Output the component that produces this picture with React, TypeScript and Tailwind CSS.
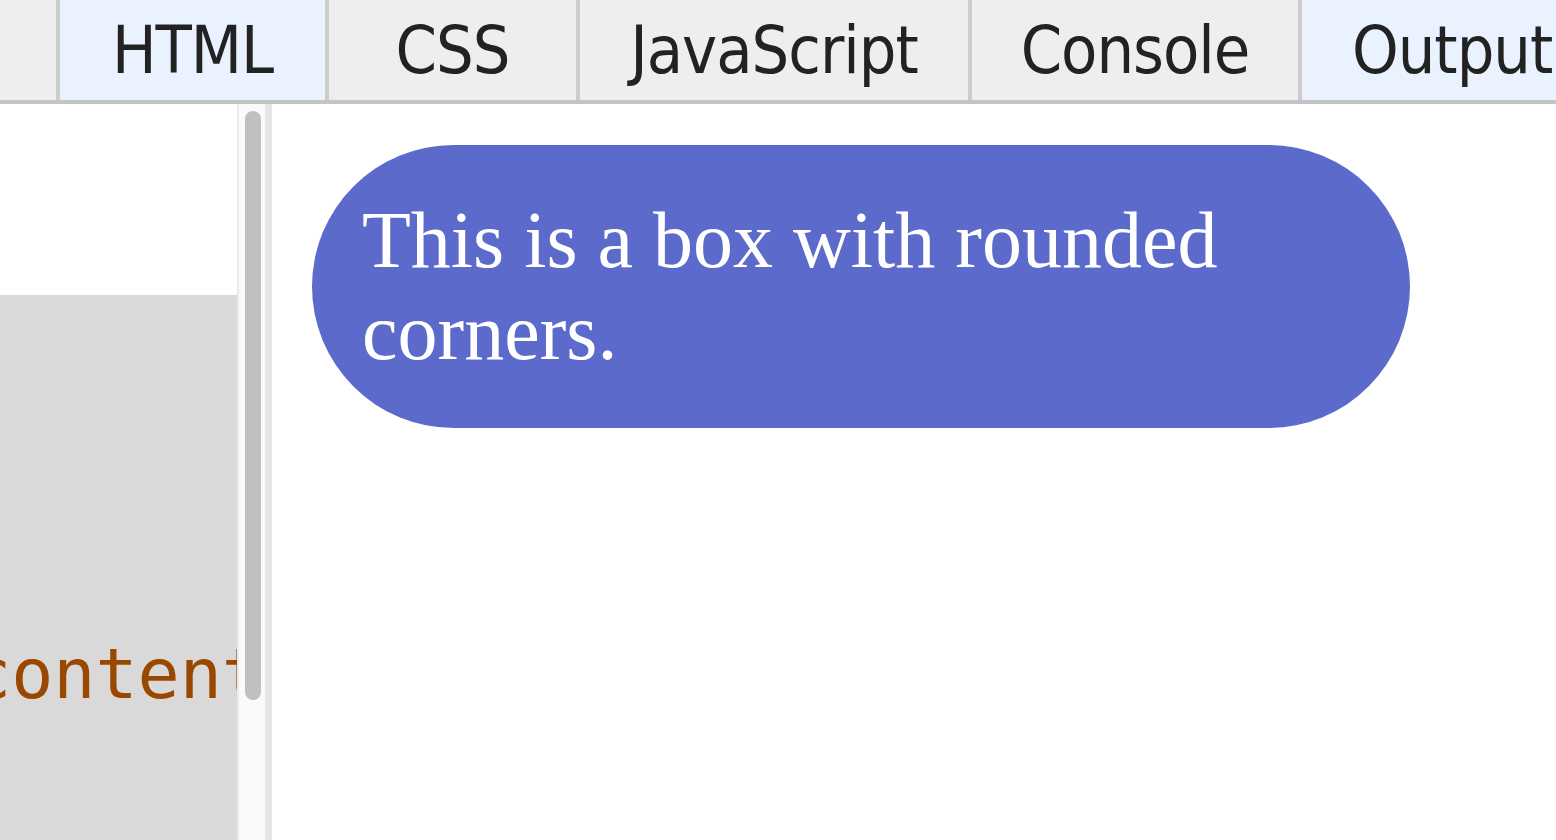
import React from "react";

const tabFont =
  "font-['DejaVu_Sans_Condensed','DejaVu_Sans',sans-serif] text-[66px] text-[#222222] tracking-[-1px]";

export default function App() {
  return (
    <div className="w-[1556px] h-[840px] overflow-hidden flex flex-col bg-white">
      {/* Tab bar */}
      <div className="h-[104px] flex border-b-4 border-[#c4c4c4] shrink-0">
        <div className="w-[56px] bg-[#eeeeee]" />
        <div className={`w-[269px] border-l-4 border-[#cccccc] bg-[#eaf2ff] flex items-center justify-center ${tabFont}`}>
          HTML
        </div>
        <div className={`w-[251px] border-l-4 border-[#cccccc] bg-[#eeeeee] flex items-center justify-center ${tabFont}`}>
          CSS
        </div>
        <div className={`w-[392px] border-l-4 border-[#cccccc] bg-[#eeeeee] flex items-center justify-center ${tabFont}`}>
          JavaScript
        </div>
        <div className={`w-[330px] border-l-4 border-[#cccccc] bg-[#eeeeee] flex items-center justify-center ${tabFont}`}>
          Console
        </div>
        <div className={`flex-1 min-w-0 border-l-4 border-[#cccccc] bg-[#eaf2ff] flex items-center pl-[50px] whitespace-nowrap overflow-hidden ${tabFont}`}>
          Output
        </div>
      </div>

      {/* Body */}
      <div className="flex flex-1 min-h-0">
        {/* Code editor panel */}
        <div className="w-[237px] flex flex-col overflow-hidden shrink-0">
          <div className="h-[191px] bg-white shrink-0" />
          <div className="flex-1 bg-[#d9d9d9] overflow-hidden">
            <div className="mt-[338px] ml-[-31px] whitespace-nowrap font-['DejaVu_Sans_Mono',monospace] text-[70px] leading-[82px] text-[#9a4700]">
              content: "";
            </div>
          </div>
        </div>

        {/* Scrollbar */}
        <div className="w-[28px] shrink-0 border-l-2 border-[#eaeaea] bg-[#fafafa] pl-[6px] pt-[7px]">
          <div className="w-[16px] h-[589px] rounded-full bg-[#c0c0c0]" />
        </div>

        {/* Divider */}
        <div className="w-[7px] shrink-0 bg-[#e6e6e6]" />

        {/* Output */}
        <div className="flex-1 pl-[40px] pt-[41px]">
          <div className="w-[1098px] h-[283px] rounded-[150px] bg-[#5c6bcb] pt-[49px] pl-[50px] pr-[50px] font-['Liberation_Serif','Times_New_Roman',serif] text-[80px] leading-[92px] text-white">
            This is a box with rounded corners.
          </div>
        </div>
      </div>
    </div>
  );
}
